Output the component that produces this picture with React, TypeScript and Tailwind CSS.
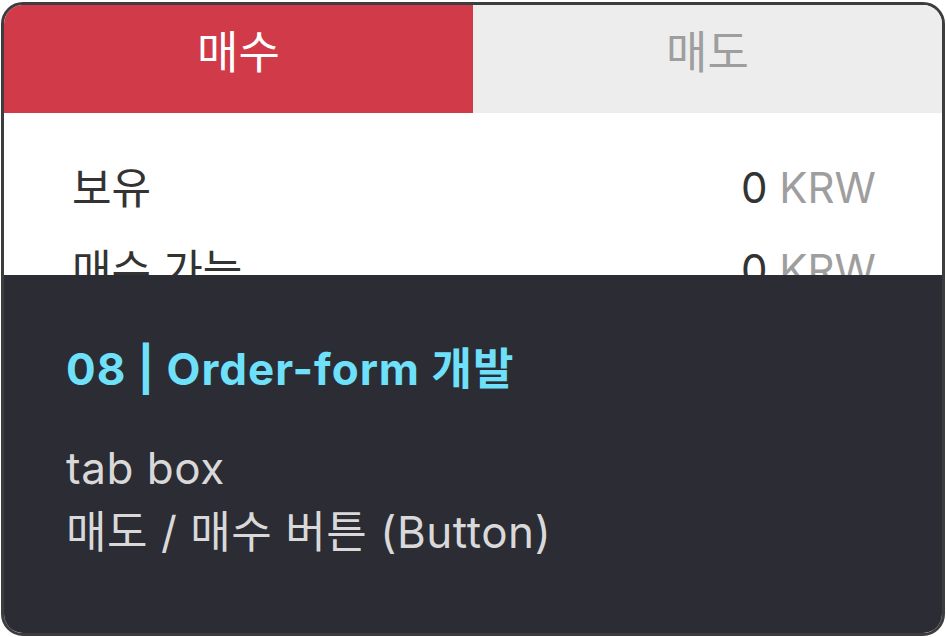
const FONT = "font-['Inter','Noto_Sans_CJK_KR',sans-serif]";

function Row({ label }: { label: string }) {
    return (
        <div className="flex items-center justify-between h-[82px]">
            <span className="text-[43px] text-[#333333] leading-none">{label}</span>
            <span className="text-[42px] leading-none">
                <span className="text-[#333333]">0</span>{" "}
                <span className="text-[#9e9e9e]">KRW</span>
            </span>
        </div>
    );
}

export default function App() {
    return (
        <div className={`w-[946px] h-[637px] bg-white pt-[2px] px-[1px] pb-[1px] ${FONT}`}>
            <div className="h-full flex flex-col rounded-[22px] border-[3px] border-[#3d3d3f] overflow-hidden bg-white">
                <div className="grid grid-cols-2 h-[108px] shrink-0">
                    <button className="bg-[#d03a49] text-white text-[45px] leading-none pb-[14px]">
                        매수
                    </button>
                    <button className="bg-[#ededed] text-[#9e9e9e] text-[45px] leading-none pb-[14px]">
                        매도
                    </button>
                </div>
                <div className="h-[162px] shrink-0 overflow-hidden pl-[68px] pr-[66px] pt-[34px]">
                    <Row label="보유" />
                    <Row label="매수 가능" />
                </div>
                <div className="flex-1 bg-[#2b2c34] pl-[62px] pt-[72px]">
                    <h2 className="text-[44px] font-bold leading-none text-[#6ee0fa] tracking-[1px]">
                        08 | Order-form 개발
                    </h2>
                    <div className="mt-[45px] text-[44px] leading-[64px] text-[#d9d9d9] tracking-[0.55px]">
                        <p>tab box</p>
                        <p>매도 / 매수 버튼 (Button)</p>
                    </div>
                </div>
            </div>
        </div>
    );
}
